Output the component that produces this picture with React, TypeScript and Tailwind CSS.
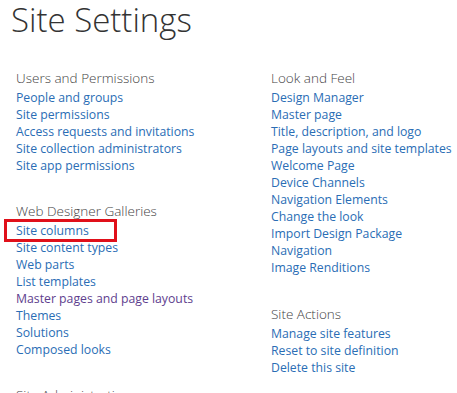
import React from "react";

type Link = { t: string; boxed?: boolean; visited?: boolean };
type Group = { title: string; links: Link[] };

const left: Group[] = [
  {
    title: "Users and Permissions",
    links: [
      { t: "People and groups" },
      { t: "Site permissions" },
      { t: "Access requests and invitations" },
      { t: "Site collection administrators" },
      { t: "Site app permissions" },
    ],
  },
  {
    title: "Web Designer Galleries",
    links: [
      { t: "Site columns", boxed: true },
      { t: "Site content types" },
      { t: "Web parts" },
      { t: "List templates" },
      { t: "Master pages and page layouts", visited: true },
      { t: "Themes" },
      { t: "Solutions" },
      { t: "Composed looks" },
    ],
  },
  { title: "Site Administration", links: [] },
];

const right: Group[] = [
  {
    title: "Look and Feel",
    links: [
      { t: "Design Manager" },
      { t: "Master page" },
      { t: "Title, description, and logo" },
      { t: "Page layouts and site templates" },
      { t: "Welcome Page" },
      { t: "Device Channels" },
      { t: "Navigation Elements" },
      { t: "Change the look" },
      { t: "Import Design Package" },
      { t: "Navigation" },
      { t: "Image Renditions" },
    ],
  },
  {
    title: "Site Actions",
    links: [
      { t: "Manage site features" },
      { t: "Reset to site definition" },
      { t: "Delete this site" },
    ],
  },
];

function GroupView({ g }: { g: Group }) {
  return (
    <div className="flex flex-col">
      <div className="h-[21px] text-[13.5px] leading-[20px] font-light text-[#444]">{g.title}</div>
      <div className="flex flex-col">
        {g.links.map((l) => (
          <div key={l.t} className="relative h-[17px] text-[12.25px] leading-[17px]">
            <span className={l.visited ? "text-[#5e3e8e]" : "text-[#2a6db5]"}>{l.t}</span>
            {l.boxed && (
              <div className="absolute left-[-12px] top-[-3px] w-[113px] h-[23px] border-[3px] border-[#e0101a]" />
            )}
          </div>
        ))}
      </div>
    </div>
  );
}

export default function App() {
  return (
    <div
      className="w-[457px] h-[393px] overflow-hidden bg-white"
      style={{ fontFamily: '"Open Sans", "Noto Sans", sans-serif' }}
    >
      <div className="pl-[11px] pt-[0px] h-[60px] text-[33px] leading-[40px] font-light text-[#333]">
        Site Settings
      </div>
      <div className="flex pl-[16px] pt-[8px]">
        <div className="w-[255px] flex flex-col gap-[27px]">
          {left.map((g) => (
            <GroupView key={g.title} g={g} />
          ))}
        </div>
        <div className="flex flex-col gap-[28px]">
          {right.map((g) => (
            <GroupView key={g.title} g={g} />
          ))}
        </div>
      </div>
    </div>
  );
}
